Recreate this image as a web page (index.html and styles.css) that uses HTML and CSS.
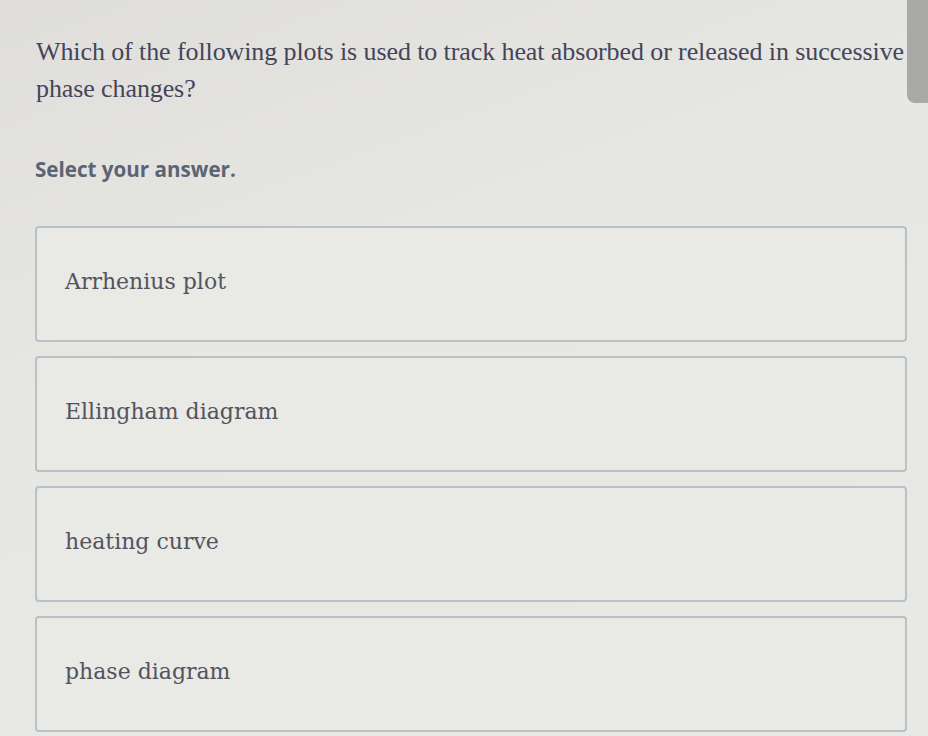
FILE: index.html
```html
<!DOCTYPE html>
<html lang="en">
<head>
  <meta charset="UTF-8">
  <title>Question</title>
  <meta name="viewport" content="width=device-width, initial-scale=1.0">
  <link rel="stylesheet" href="styles.css">
</head>
<body>
  <div class="scroll-thumb"></div>

  <div class="question">
    <p class="prompt">Which of the following plots is used to track heat absorbed or released in successive phase changes?</p>

    <p class="instruction">Select your answer.</p>

    <div class="choices">
      <div class="choice">Arrhenius plot</div>
      <div class="choice">Ellingham diagram</div>
      <div class="choice">heating curve</div>
      <div class="choice">phase diagram</div>
    </div>
  </div>
</body>
</html>
```

FILE: styles.css
```css
* {
  margin: 0;
  padding: 0;
  box-sizing: border-box;
}

body {
  background: linear-gradient(160deg, #dfdedb 0%, #e7e7e3 40%, #e8e8e4 100%);
  color: #484858;
  min-height: 100vh;
  overflow: hidden;
}

.question {
  padding: 33px 21px 0 35px;
}

.prompt {
  font-family: 'Liberation Serif', serif;
  font-size: 26px;
  line-height: 37px;
  letter-spacing: -0.1px;
  color: #45455a;
  padding-left: 1px;
  margin-right: -6px;
}

.instruction {
  margin-top: 50px;
  font-family: 'Open Sans', sans-serif;
  font-weight: 700;
  font-size: 20.6px;
  line-height: 24px;
  color: #5b6472;
}

.choices {
  margin-top: 45px;
  display: flex;
  flex-direction: column;
  gap: 14px;
}

.choice {
  height: 116px;
  display: flex;
  align-items: center;
  padding: 0 0 5px 28px;
  border: 2px solid #b7c1ca;
  border-radius: 4px;
  background: #e9e9e5;
  font-family: 'DejaVu Serif', serif;
  font-size: 22px;
  color: #53535f;
}

/* overlay scrollbar thumb on the right edge */
.scroll-thumb {
  position: absolute;
  top: -8px;
  right: -6px;
  width: 27px;
  height: 111px;
  border-radius: 8px;
  background: #a9a9a8;
}
```
